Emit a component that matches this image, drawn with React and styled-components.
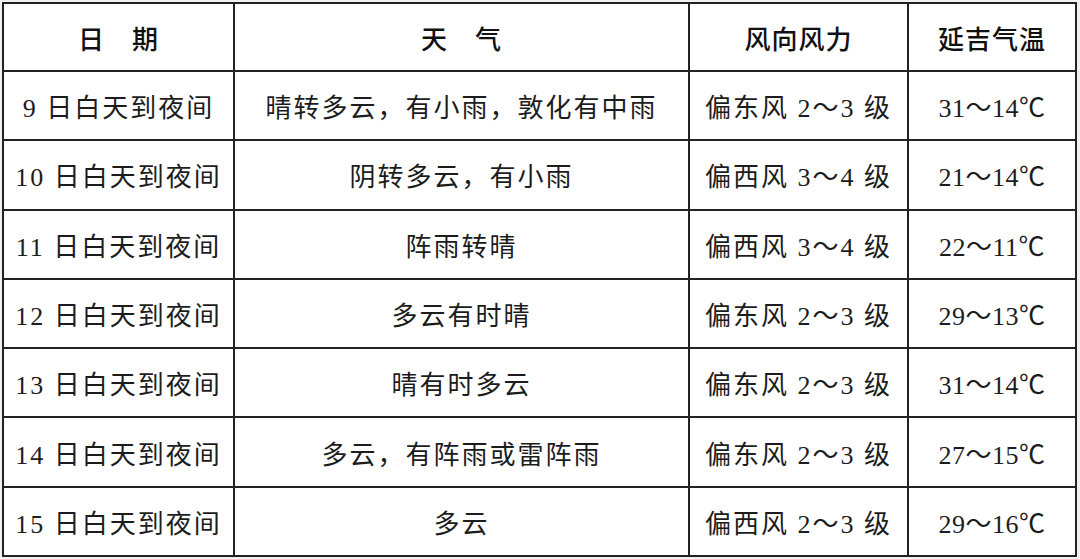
import React from "react";
import styled, { createGlobalStyle } from "styled-components";

const Global = createGlobalStyle`
  html, body { margin: 0; padding: 0; background: #f1f1f1; }
  body { font-family: "Liberation Serif", "Noto Sans CJK SC", serif; }
`;

const Page = styled.div`
  padding: 2px 0 0 2px;
  width: 1080px;
  height: 559px;
  box-sizing: border-box;
  background: #f1f1f1;
`;

const Table = styled.div`
  display: grid;
  grid-template-columns: 229px 453px 217px 166px;
  grid-template-rows: 66px repeat(7, 67.29px);
  gap: 2px;
  padding: 2px;
  width: max-content;
  background: #222;
`;

const Cell = styled.div`
  background: #fff;
  display: flex;
  align-items: center;
  justify-content: center;
  color: #1c1c1c;
  font-family: "Liberation Serif", "Noto Sans CJK SC", serif;
  font-size: 26px;
  letter-spacing: ${(p) => (p.$tight ? "0.5px" : "2px")};
  white-space: pre;
`;

const HeadCell = styled(Cell)`
  font-family: "Noto Sans CJK SC", sans-serif;
  font-weight: 500;
  color: #111;
  letter-spacing: 1px;
`;

const headers = ["日\u3000期", "天\u3000气", "风向风力", "延吉气温"];

const rows = [
  ["9 日白天到夜间", "晴转多云，有小雨，敦化有中雨", "偏东风 2～3 级", "31～14℃"],
  ["10 日白天到夜间", "阴转多云，有小雨", "偏西风 3～4 级", "21～14℃"],
  ["11 日白天到夜间", "阵雨转晴", "偏西风 3～4 级", "22～11℃"],
  ["12 日白天到夜间", "多云有时晴", "偏东风 2～3 级", "29～13℃"],
  ["13 日白天到夜间", "晴有时多云", "偏东风 2～3 级", "31～14℃"],
  ["14 日白天到夜间", "多云，有阵雨或雷阵雨", "偏东风 2～3 级", "27～15℃"],
  ["15 日白天到夜间", "多云", "偏西风 2～3 级", "29～16℃"],
];

export default function App() {
  return (
    <Page>
      <Global />
      <Table>
        {headers.map((h) => (
          <HeadCell key={h}>{h}</HeadCell>
        ))}
        {rows.map((r, i) =>
          r.map((c, j) => (
            <Cell key={i + "-" + j} $tight={j === 3}>
              {c}
            </Cell>
          ))
        )}
      </Table>
    </Page>
  );
}
